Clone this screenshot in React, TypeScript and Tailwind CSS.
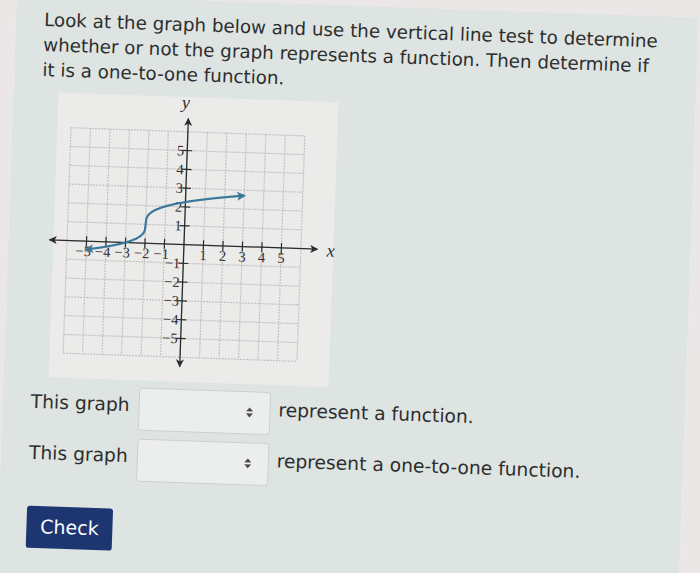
import React from 'react'

const font = { fontFamily: '"DejaVu Sans", Verdana, sans-serif' }

// graph geometry (svg-local px)
const OX = 142.6
const OY = 147.5
const SX = 19.5
const SY = 18.8

function curvePath() {
  const pts: string[] = []
  for (let i = 0; i <= 320; i++) {
    const x = -5 + (8 * i) / 320
    const y = Math.cbrt(x + 2) + 1
    pts.push(`${(OX + x * SX).toFixed(2)},${(OY - y * SY).toFixed(2)}`)
  }
  return 'M' + pts.join(' L')
}

function Graph() {
  const ks = [-6, -5, -4, -3, -2, -1, 0, 1, 2, 3, 4, 5, 6]
  const ticks = [-5, -4, -3, -2, -1, 1, 2, 3, 4, 5]
  return (
    <svg width="300" height="290" viewBox="0 0 300 290" className="mt-[9.5px] ml-[4.7px] overflow-visible">
      <defs>
        <marker id="ax" viewBox="0 0 10 10" refX="9" refY="5" markerWidth="10" markerHeight="8" markerUnits="userSpaceOnUse" orient="auto-start-reverse">
          <path d="M0,0 L10,5 L0,10 L2.5,5 Z" fill="#2b2b2b" />
        </marker>
        <marker id="cv" viewBox="0 0 10 10" refX="8" refY="5" markerWidth="11" markerHeight="9" markerUnits="userSpaceOnUse" orient="auto-start-reverse">
          <path d="M0,0 L10,5 L0,10 L2.5,5 Z" fill="#3a799a" />
        </marker>
      </defs>
      <rect x="12" y="0" width="280" height="285" fill="#ebebea" />
      {ks.map((k) => (
        <line key={'v' + k} x1={OX + k * SX} y1={OY - 6 * SY} x2={OX + k * SX} y2={OY + 6 * SY} stroke="#c2c2c2" strokeWidth="1.2" strokeDasharray="2 1" />
      ))}
      {ks.map((k) => (
        <line key={'h' + k} x1={OX - 6 * SX} y1={OY - k * SY} x2={OX + 6 * SX} y2={OY - k * SY} stroke="#c2c2c2" strokeWidth="1.2" strokeDasharray="2 1" />
      ))}
      {/* axes */}
      <line x1={OX - 6.9 * SX} y1={OY} x2={OX + 6.85 * SX} y2={OY} stroke="#2b2b2b" strokeWidth="1.3" markerStart="url(#ax)" markerEnd="url(#ax)" />
      <line x1={OX} y1={OY + 6.5 * SY} x2={OX} y2={OY - 6.7 * SY} stroke="#2b2b2b" strokeWidth="1.3" markerStart="url(#ax)" markerEnd="url(#ax)" />
      {ticks.map((k) => (
        <line key={'tx' + k} x1={OX + k * SX} y1={OY - 5} x2={OX + k * SX} y2={OY + 5} stroke="#2b2b2b" strokeWidth="1.2" />
      ))}
      {ticks.map((k) => (
        <line key={'ty' + k} x1={OX - 5} y1={OY - k * SY} x2={OX + 5} y2={OY - k * SY} stroke="#2b2b2b" strokeWidth="1.2" />
      ))}
      <g fontFamily='"Liberation Serif", "Times New Roman", serif' fontSize="14.5" fill="#303030">
        {ticks.map((k) => (
          <text key={'lx' + k} x={OX + k * SX - (k < 0 ? 3 : 0)} y={OY + 15} textAnchor="middle">
            {k < 0 ? '\u2212' + -k : k}
          </text>
        ))}
        {ticks.map((k) => (
          <text key={'ly' + k} x={OX - 3} y={OY - k * SY + 5} textAnchor="end">
            {k < 0 ? '\u2212' + -k : k}
          </text>
        ))}
        <text x={OX + 143} y={OY + 7} fontSize="18" fontStyle="italic">x</text>
        <text x={OX - 7} y={OY - 136} fontSize="18" fontStyle="italic">y</text>
      </g>
      <path d={curvePath()} fill="none" stroke="#3a799a" strokeWidth="2.2" markerStart="url(#cv)" markerEnd="url(#cv)" />
    </svg>
  )
}

function Select() {
  return (
    <div className="flex h-[43px] w-[132px] items-center justify-end rounded-[4px] border border-[#cdd0cf] bg-[#eceeed] pr-[16px]">
      <svg width="8" height="12" viewBox="0 0 8 12">
        <path d="M4,1 L7.5,5 L0.5,5 Z M4,11 L7.5,7 L0.5,7 Z" fill="#4a4a4a" />
      </svg>
    </div>
  )
}

export default function App() {
  return (
    <div className="h-[573px] w-[700px] overflow-hidden bg-[#ebe7e7]" style={font}>
      <div className="ml-[16px] mt-[-6px] h-[640px] w-[684px] origin-top-left rotate-[2deg] border-x border-[#e9eceb] bg-[#dde4e2] pl-[28px] pt-[12px] text-[#2e2e2e]">
        <p className="text-[18.3px] leading-[25px]">
          Look at the graph below and use the vertical line test to determine
          <br />
          whether or not the graph represents a function. Then determine if
          <br />
          it is a one-to-one function.
        </p>
        <Graph />
        <div className="mt-[2px] flex flex-col gap-[8px] text-[18.7px]">
          <div className="flex items-center">
            <span className="mr-[9px] -mt-[6px]">This graph</span>
            <Select />
            <span className="ml-[8px] -mt-[5px]">represent a function.</span>
          </div>
          <div className="flex items-center">
            <span className="mr-[9px] -mt-[6px]">This graph</span>
            <Select />
            <span className="ml-[8px] -mt-[5px]">represent a one-to-one function.</span>
          </div>
        </div>
        <button className="mt-[28px] flex h-[42px] w-[86px] items-center justify-center rounded-[3px] bg-[#1d3672] text-[19px] text-white">
          Check
        </button>
      </div>
    </div>
  )
}
